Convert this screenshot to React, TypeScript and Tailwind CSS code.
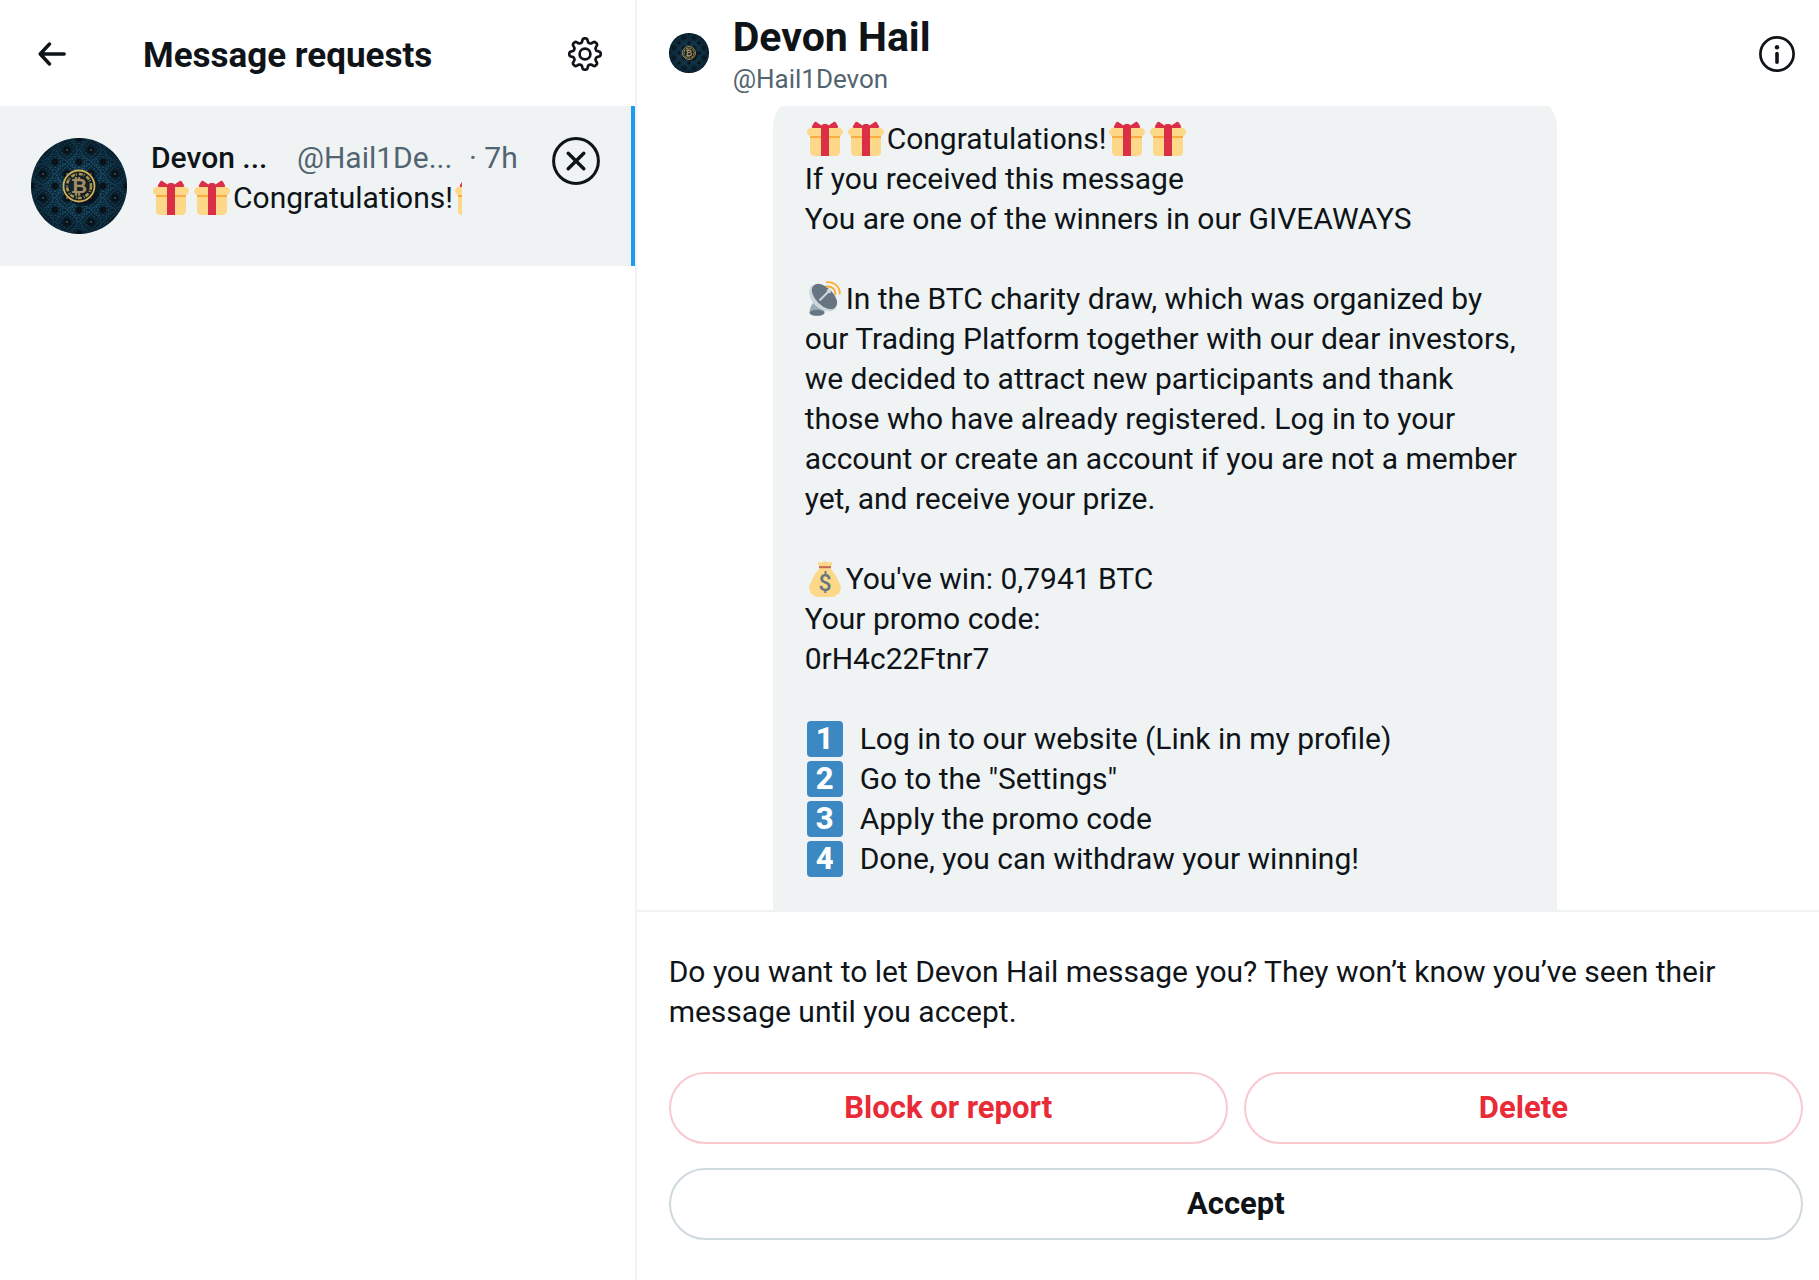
import { useId } from "react";
import type { ReactNode } from "react";

// Eight-lobed outline around a 36x36 box
const gearOutline = Array.from({ length: 160 }, (_, i) => {
  const angle = (i / 160) * Math.PI * 2;
  const radius = 13.7 + 2.1 * Math.tanh(1.8 * Math.cos(8 * angle));
  const x = 18 + radius * Math.sin(angle);
  const y = 18 - radius * Math.cos(angle);
  return `${x.toFixed(2)},${y.toFixed(2)}`;
}).join(" ");

const BackIcon = () => (
  <svg
    viewBox="0 0 28 24"
    fill="none"
    stroke="currentColor"
    strokeWidth="3.4"
    strokeLinecap="round"
    strokeLinejoin="round"
    className="h-6 w-7"
  >
    <path d="M11.5 2 2.2 12l9.3 10M2.2 12h24" />
  </svg>
);

const GearIcon = () => (
  <svg
    viewBox="0 0 36 36"
    fill="none"
    stroke="currentColor"
    strokeWidth="2.7"
    strokeLinejoin="round"
    className="size-9"
  >
    <polygon points={gearOutline} />
    <circle cx="18" cy="18" r="5.4" />
  </svg>
);

const InfoIcon = () => (
  <svg viewBox="0 0 36 36" fill="none" className="size-9">
    <circle cx="18" cy="18" r="16.6" stroke="currentColor" strokeWidth="2.7" />
    <circle cx="18" cy="11.3" r="2.2" fill="currentColor" />
    <path d="M18 17.5v8.7" stroke="currentColor" strokeWidth="3.6" strokeLinecap="round" />
  </svg>
);

const DismissIcon = () => (
  <svg viewBox="0 0 48 48" fill="none" stroke="currentColor" className="size-12 overflow-visible">
    <circle cx="24" cy="23" r="22.4" strokeWidth="3" />
    <path d="m16.2 15.2 15.6 15.6m0-15.6L16.2 30.8" strokeWidth="3.4" strokeLinecap="round" />
  </svg>
);

const Avatar = ({ className }: { className: string }) => {
  const id = useId();

  return (
    <svg
      viewBox="0 0 96 96"
      role="img"
      aria-label="Devon Hail"
      className={`shrink-0 rounded-full ${className}`}
    >
      <defs>
        <pattern id={`${id}tiles`} x="0" y="0" width="24" height="24" patternUnits="userSpaceOnUse">
          <rect width="24" height="24" fill="#0b2737" />
          <g fill="none" stroke="#1f5c7b" strokeWidth="1.1" strokeDasharray="2 1.2">
            <path d="M12 0 24 12 12 24 0 12zM12 4l8 8-8 8-8-8zM0 6l6-6M18 0l6 6M0 18l6 6M18 24l6-6" />
            <path d="M0 9l9-9M15 0l9 9M0 15l9 9M15 24l9-9" />
            <circle cx="12" cy="12" r="10" />
          </g>
          <rect x="8.5" y="8.5" width="7" height="7" rx="2" fill="#0b1319" />
          <path d="M0 0h3v3H0zM21 0h3v3h-3zM0 21h3v3H0zM21 21h3v3h-3z" fill="#0b1319" />
          <circle cx="12" cy="12" r="1" fill="#5f7b89" />
        </pattern>
        <radialGradient id={`${id}shade`}>
          <stop offset="0.3" stopColor="#04101a" stopOpacity="0" />
          <stop offset="1" stopColor="#04101a" stopOpacity="0.5" />
        </radialGradient>
      </defs>
      <rect width="96" height="96" fill={`url(#${id}tiles)`} />
      <rect width="96" height="96" fill={`url(#${id}shade)`} />
      <circle cx="52" cy="51" r="17" fill="#050d14" opacity="0.7" />
      <circle cx="48" cy="48" r="15.5" fill="#101f26" stroke="#cfae58" strokeWidth="1.8" />
      <circle cx="48" cy="48" r="12" fill="none" stroke="#a89250" strokeWidth="2.6" strokeDasharray="4 1 1 2" />
      <circle cx="48" cy="48" r="9.5" fill="#17232a" />
      <text
        x="48"
        y="55"
        textAnchor="middle"
        fontSize="20"
        fontWeight="700"
        fill="#a58f62"
        className="font-['DejaVu_Sans',sans-serif]"
      >
        ₿
      </text>
    </svg>
  );
};

const Emoji = ({ label, children }: { label: string; children: ReactNode }) => (
  <svg
    viewBox="0 0 36 36"
    role="img"
    aria-label={label}
    className="ml-0.5 mr-[3px] inline-block size-9 align-[-8px]"
  >
    {children}
  </svg>
);

const Gift = () => (
  <Emoji label="Wrapped present">
    <path
      fill="#FDD888"
      d="M33 31c0 2.2-1.8 4-4 4H7c-2.2 0-4-1.8-4-4V14c0-2.2 1.8-4 4-4h22c2.2 0 4 1.8 4 4v17z"
    />
    <path fill="#FDD888" d="M36 11c0 2.2-1.8 4-4 4H4c-2.2 0-4-1.8-4-4s1.8-4 4-4h28c2.2 0 4 1.8 4 4z" />
    <path fill="#FCAB40" d="M3 15h30v2H3z" />
    <path fill="#DA2F47" d="M19 3h-2c-1.657 0-3 1.343-3 3v29h8V6c0-1.657-1.343-3-3-3z" />
    <path
      fill="#DA2F47"
      d="M16 7c1.1 0 1.263-.516.361-1.147L9.639 1.147c-.902-.631-2.085-.366-2.631.589L4.992 5.264C4.446 6.219 4.9 7 6 7h10zm4 0c-1.1 0-1.263-.516-.361-1.147l6.723-4.706c.901-.631 2.085-.366 2.631.589l2.016 3.527C31.554 6.219 31.1 7 30 7H20z"
    />
  </Emoji>
);

const Satellite = () => (
  <Emoji label="Satellite antenna">
    <path fill="#99AAB5" d="M7 21l9 6c1 1 1.5 3 1.5 4.5-3 2-11.5 2-15 0C2.5 28 4 24 7 21z" />
    <ellipse cx="10" cy="31.8" rx="7.5" ry="3" fill="#66757F" />
    <path fill="#CCD6DD" d="M5 4C1 8 1 17 8 24c7 7 16 8 21 4L18 14z" />
    <ellipse cx="17.5" cy="15.5" rx="15.5" ry="8.8" transform="rotate(45 17.5 15.5)" fill="#66757F" />
    <path d="M12.5 19.5 22 10" stroke="#CCD6DD" strokeWidth="2" />
    <circle cx="22" cy="10" r="2.2" fill="#CCD6DD" />
    <g fill="none" stroke="#FFAC33" strokeWidth="1.9" strokeLinecap="round">
      <path d="M20 1.2c7-.6 12.8 4 12.8 11.3" />
      <path d="M20 5.5c4.8-.3 8.5 2.5 8.5 7.5" />
    </g>
  </Emoji>
);

const MoneyBag = () => (
  <Emoji label="Money bag">
    <path
      fill="#FDD888"
      d="M31.9 21.5C30.5 16 26 10.5 23.5 7.5V6.2c1-1.2 2-3.4 1.5-4.7-.5-1.2-1.8.2-3 .2S20 .3 18 .3s-2.8 1.4-4 1.4-2.5-1.4-3-.2c-.5 1.3.5 3.5 1.5 4.7v1.3C10 10.5 5.5 16 4.1 21.5 2.5 22.5 2 24 2.6 25.5c-1 1.5-.6 3.3.6 4.2-.2 2.3 1.3 3.5 3 3.8C7.5 35.5 9 36 10.5 36h15c1.5 0 3-.5 4.3-2.5 1.7-.3 3.2-1.5 3-3.8 1.2-.9 1.6-2.7.6-4.2.6-1.5.1-3-1.5-4z"
    />
    <path fill="#BF6952" d="M12 5.2h12v2H12z" />
    <text
      x="18"
      y="30"
      textAnchor="middle"
      fontSize="23"
      fontWeight="500"
      fill="#67757F"
      className="font-[Roboto,sans-serif]"
    >
      $
    </text>
  </Emoji>
);

const Keycap = ({ digit }: { digit: number }) => (
  <span className="my-0.5 ml-0.5 mr-[3px] inline-flex size-9 items-center justify-center rounded bg-[#3b88c3] text-[31px] font-extrabold text-white">
    {digit}
  </span>
);

const steps = [
  "Log in to our website (Link in my profile)",
  'Go to the "Settings"',
  "Apply the promo code",
  "Done, you can withdraw your winning!",
];

const RequestList = () => (
  <aside className="flex w-[35%] shrink-0 flex-col border-r-2 border-[#eff3f4]">
    <header className="flex h-[106px] items-center pt-0.5 pl-[38px] pr-8">
      <button type="button" aria-label="Back">
        <BackIcon />
      </button>
      <h1 className="mt-1 ml-[77px] flex-1 text-[35px] leading-10 font-bold whitespace-nowrap">
        Message requests
      </h1>
      <button type="button" aria-label="Settings">
        <GearIcon />
      </button>
    </header>

    <div className="flex h-40 border-r-4 border-[#1d9bf0] bg-[#eff3f4] px-[31px] py-8">
      <Avatar className="size-24" />
      <div className="ml-6 min-w-0 flex-1">
        <div className="flex whitespace-nowrap">
          <span className="w-[146px] shrink-0 font-medium">Devon ...</span>
          <span className="w-[172px] shrink-0 text-[#536471]">@Hail1De...</span>
          <span className="text-[#536471]">· 7h</span>
        </div>
        <p className="w-[311px] overflow-hidden whitespace-nowrap">
          <Gift />
          <Gift />
          Congratulations!
          <Gift />
          <Gift />
        </p>
      </div>
      <button type="button" aria-label="Delete request" className="self-start">
        <DismissIcon />
      </button>
    </div>
  </aside>
);

const Message = () => (
  <div className="-mt-[11px] ml-[136px] w-[784px] shrink-0 rounded-[32px] bg-[#eff3f4] px-8 pt-6 pb-20">
    <p>
      <Gift />
      <Gift />
      Congratulations!
      <Gift />
      <Gift />
    </p>
    <p>If you received this message</p>
    <p>You are one of the winners in our GIVEAWAYS</p>
    <p className="mt-10">
      <Satellite />
      In the BTC charity draw, which was organized by our Trading Platform together with our dear
      investors, we decided to attract new participants and thank those who have already
      registered. Log in to your account or create an account if you are not a member yet, and
      receive your prize.
    </p>
    <p className="mt-10">
      <MoneyBag />
      You've win: 0,7941 BTC
    </p>
    <p>Your promo code:</p>
    <p>0rH4c22Ftnr7</p>
    <ol className="mt-10">
      {steps.map((step, i) => (
        <li key={step} className="flex">
          <Keycap digit={i + 1} />
          <span className="ml-3.5">{step}</span>
        </li>
      ))}
    </ol>
  </div>
);

const RequestActions = () => (
  <footer className="border-t-2 border-[#eff3f4] bg-white pt-10 pr-4 pb-10 pl-8">
    <p>
      Do you want to let Devon Hail message you? They won’t know you’ve seen their message until
      you accept.
    </p>
    <div className="mt-10 grid grid-cols-2 gap-x-4 gap-y-6 text-[31px] font-bold">
      <button type="button" className="h-[72px] rounded-full border-2 border-[#f9c9cf] text-[#e92a37]">
        Block or report
      </button>
      <button type="button" className="h-[72px] rounded-full border-2 border-[#f9c9cf] text-[#e92a37]">
        Delete
      </button>
      <button type="button" className="col-span-2 h-[72px] rounded-full border-2 border-[#cfd9de]">
        Accept
      </button>
    </div>
  </footer>
);

export default function App() {
  return (
    <div className="flex h-screen bg-white font-[Roboto,sans-serif] text-[30px] leading-10 text-[#0f1419]">
      <RequestList />
      <main className="flex min-w-0 flex-1 flex-col">
        <header className="flex h-[106px] shrink-0 items-center pr-6 pl-8">
          <Avatar className="size-10" />
          <div className="mt-1 ml-6 flex-1">
            <h2 className="text-[41px] leading-12 font-bold">Devon Hail</h2>
            <p className="text-[26px] leading-9 text-[#536471]">@Hail1Devon</p>
          </div>
          <button type="button" aria-label="Conversation info" className="mt-0.5">
            <InfoIcon />
          </button>
        </header>
        <section className="flex min-h-0 flex-1 flex-col overflow-hidden">
          <Message />
        </section>
        <RequestActions />
      </main>
    </div>
  );
}
